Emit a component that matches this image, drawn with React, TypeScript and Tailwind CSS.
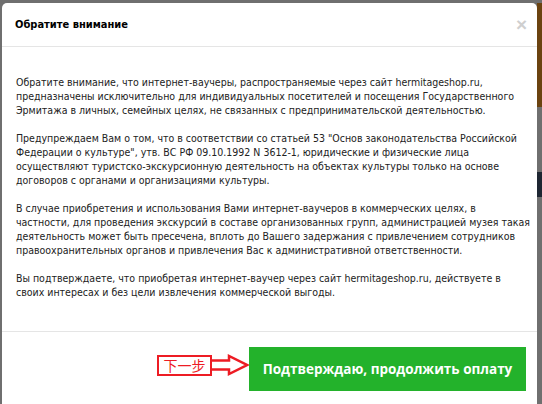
import React from "react";

const PARAGRAPHS: string[][] = [
  [
    "Обратите внимание, что интернет-ваучеры, распространяемые через сайт hermitageshop.ru,",
    "предназначены исключительно для индивидуальных посетителей и посещения Государственного",
    "Эрмитажа в личных, семейных целях, не связанных с предпринимательской деятельностью.",
  ],
  [
    "Предупреждаем Вам о том, что в соответствии со статьей 53 \"Основ законодательства Российской",
    "Федерации о культуре\", утв. ВС РФ 09.10.1992 N 3612-1, юридические и физические лица",
    "осуществляют туристско-экскурсионную деятельность на объектах культуры только на основе",
    "договоров с органами и организациями культуры.",
  ],
  [
    "В случае приобретения и использования Вами интернет-ваучеров в коммерческих целях, в",
    "частности, для проведения экскурсий в составе организованных групп, администрацией музея такая",
    "деятельность может быть пресечена, вплоть до Вашего задержания с привлечением сотрудников",
    "правоохранительных органов и привлечения Вас к административной ответственности.",
  ],
  [
    "Вы подтверждаете, что приобретая интернет-ваучер через сайт hermitageshop.ru, действуете в",
    "своих интересах и без цели извлечения коммерческой выгоды.",
  ],
];

const font = "font-['Tahoma','DejaVu_Sans_Condensed','Liberation_Sans',sans-serif]";

const App: React.FC = () => {
  return (
    <div className="relative w-[542px] h-[404px] overflow-hidden bg-[#6f6f6f]">
      {/* page behind the overlay, peeking on the right */}
      <div className="absolute right-0 top-[3px] w-[5px] h-[104px] bg-[#6b4310]" />
      <div className="absolute right-0 top-[172px] w-[5px] h-[25px] bg-[#1e2632]" />

      <div className={`ml-[2px] mt-[3px] w-[535px] h-[420px] bg-white rounded-[5px] ${font} text-[#222]`}>
        <div className="flex items-center justify-between h-[44px] pl-[13px] pr-[10px] border-b border-[#e5e5e5]">
          <h4 className="text-[11px] font-bold text-black leading-[14px]">Обратите внимание</h4>
          <span className="text-[19px] font-bold leading-none text-[#cfcfcf] font-['Liberation_Sans',sans-serif]">×</span>
        </div>

        <div className="pt-[28px] pb-[32px] pl-[14px] flex flex-col gap-[14px] text-[10.5px] leading-[14px]">
          {PARAGRAPHS.map((lines, i) => (
            <p key={i} className="whitespace-nowrap">
              {lines.map((l, j) => (
                <React.Fragment key={j}>
                  {l}
                  {j < lines.length - 1 && <br />}
                </React.Fragment>
              ))}
            </p>
          ))}
        </div>

        <div className="flex justify-end items-start pt-[15px] pr-[11px] border-t border-[#e5e5e5]">
          <div className="mt-[7px] flex items-center">
            <div className="w-[55px] h-[21px] border-2 border-[#ed1c24] flex items-center justify-center text-[#ed1c24] text-[14px] leading-none font-['Noto_Sans_CJK_SC',sans-serif]">
              下一步
            </div>
            <svg width="37" height="22" viewBox="0 0 37 22" className="block">
              <path
                d="M0 6.5 H17 V2 L35 11 L17 20 V15.5 H0"
                fill="none"
                stroke="#ed1c24"
                strokeWidth="2.5"
                strokeLinejoin="miter"
              />
            </svg>
          </div>
          <button className="w-[277px] h-[44px] bg-[#23b22b] text-white text-[13.5px] font-bold font-['Open_Sans','Liberation_Sans',sans-serif]">
            Подтверждаю, продолжить оплату
          </button>
        </div>
      </div>
    </div>
  );
};

export default App;
